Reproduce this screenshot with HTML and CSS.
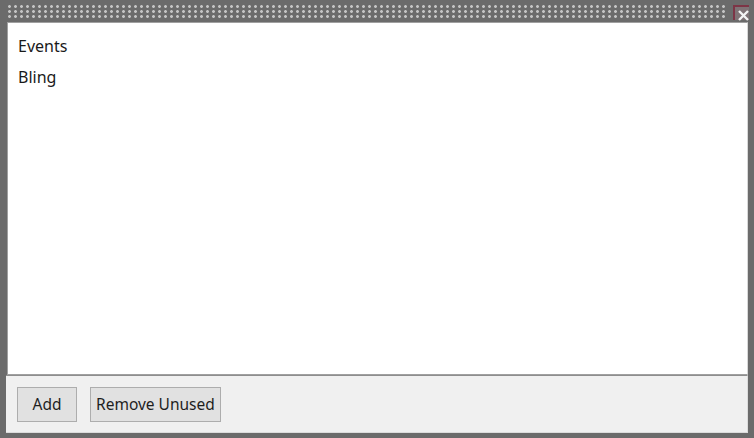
FILE: index.html
```html
<!DOCTYPE html>
<html lang="en">
<head>
    <meta charset="UTF-8">
    <title>Categories</title>
    <link rel="stylesheet" href="styles.css">
</head>
<body>
<div class="window">
    <div class="titlebar">
        <div class="grip"></div>
        <button class="close-btn" title="Close">
            <svg width="17" height="16" viewBox="0 0 17 16">
                <path d="M1 15 V1 H16" stroke="#7d3546" stroke-width="2" fill="none"/>
                <path d="M2 2 H16 V15 H2 Z" fill="#9a7f86" opacity="0.45"/>
                <path d="M6 6 L15 15 M15 6 L6 15" stroke="#f4f4f4" stroke-width="2.4"/>
            </svg>
        </button>
    </div>
    <ul class="item-list">
        <li>Events</li>
        <li>Bling</li>
    </ul>
    <div class="footer">
        <button class="btn">Add</button>
        <button class="btn">Remove Unused</button>
    </div>
</div>
</body>
</html>
```

FILE: styles.css
```css
body {
    margin: 0;
    width: 754px;
    height: 438px;
    background-color: #6b6b6b;
    font-family: "Noto Sans", "Open Sans", sans-serif;
    overflow: hidden;
}

.window {
    display: flex;
    flex-direction: column;
    height: 438px;
    padding: 0 6px 5px 6px;
    box-sizing: border-box;
}

.titlebar {
    display: flex;
    align-items: center;
    height: 22px;
    padding-left: 2px;
}

.grip {
    flex: 1;
    height: 15px;
    margin-top: 2px;
    background-image: radial-gradient(circle at 1.5px 1.5px, #c4c4c4 1.2px, transparent 1.6px);
    background-size: 6px 5px;
}

.close-btn {
    width: 18px;
    height: 18px;
    padding: 0;
    margin: 3px -2px 0 4px;
    border: none;
    background: none;
    display: flex;
    align-items: center;
    justify-content: center;
}

.item-list {
    flex: 1;
    list-style: none;
    margin: 0 0 0 1px;
    padding: 8px 0 0 0;
    background-color: #ffffff;
    border: 1px solid #a0a0a0;
    border-right-color: #d8d8d8;
}

.item-list li {
    font-size: 16px;
    line-height: 31px;
    padding-left: 10px;
    color: #1a1a1a;
}

.footer {
    display: flex;
    align-items: center;
    gap: 13px;
    height: 56px;
    padding: 0 0 0 11px;
    background-color: #f0f0f0;
    border-top: 1px solid #8e8e8e;
    border-right: 1px solid #dcdcdc;
    border-bottom: 1px solid #dcdcdc;
}

.btn {
    height: 35px;
    padding: 0 5px;
    min-width: 60px;
    font-family: "Noto Sans", "Open Sans", sans-serif;
    font-size: 15.5px;
    color: #1e1e1e;
    background-color: #e1e1e1;
    border: 1px solid #adadad;
}
```
